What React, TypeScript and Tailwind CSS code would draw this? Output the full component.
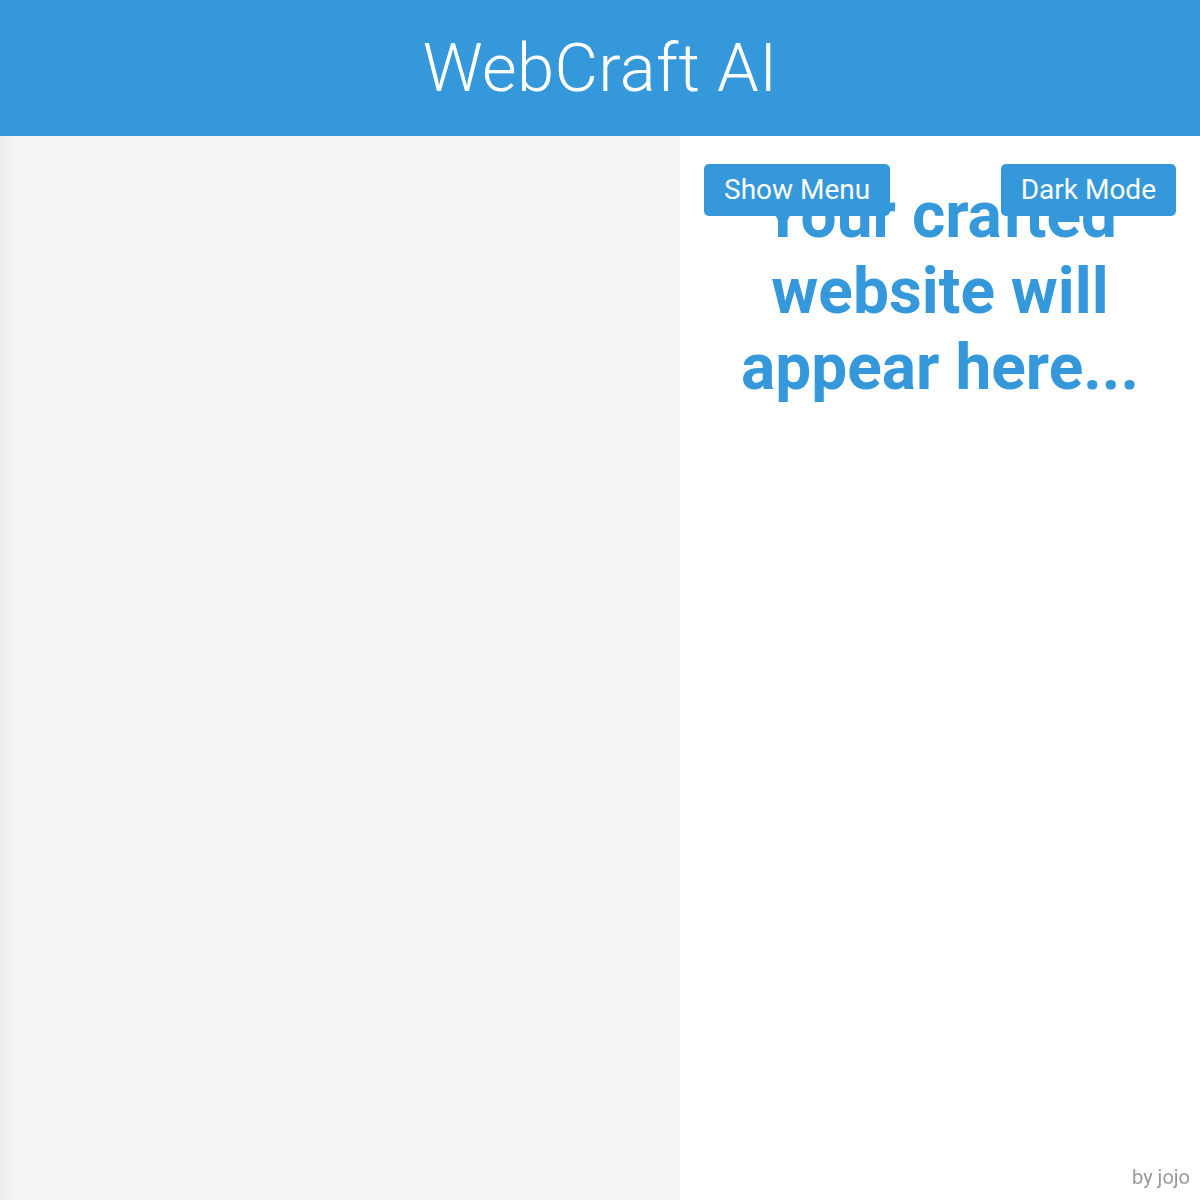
export default function App() {
  return (
    <div
      className="flex h-[1200px] flex-col overflow-hidden bg-white"
      style={{ fontFamily: 'Roboto, "Liberation Sans", sans-serif' }}
    >
      {/* Header */}
      <header className="flex h-[136px] shrink-0 items-center justify-center bg-[#3498db]">
        <h1 className="text-[67px] leading-[78px] font-light tracking-[0.3px] text-white">WebCraft AI</h1>
      </header>

      <div className="flex flex-1">
        {/* Prompt panel */}
        <div className="w-[680px] shrink-0 bg-[#f5f5f5] shadow-[inset_14px_0_16px_-10px_rgba(0,0,0,0.06)]" />

        {/* Preview panel */}
        <div className="relative flex-1 bg-white px-[40px] pt-[42px]">
          <h2 className="text-center text-[64px] leading-[76px] font-bold text-[#3498db]">
            Your crafted website will appear here...
          </h2>
          <button className="absolute top-[28px] left-[24px] h-[52px] rounded-[5px] bg-[#3498db] px-[20px] text-[28px] text-white">
            Show Menu
          </button>
          <button className="absolute top-[28px] right-[24px] h-[52px] rounded-[5px] bg-[#3498db] px-[20px] text-[28px] text-white">
            Dark Mode
          </button>
        </div>
      </div>

      <span className="fixed right-[10px] bottom-[8px] text-[20px] text-[#999]">by jojo</span>
    </div>
  )
}
